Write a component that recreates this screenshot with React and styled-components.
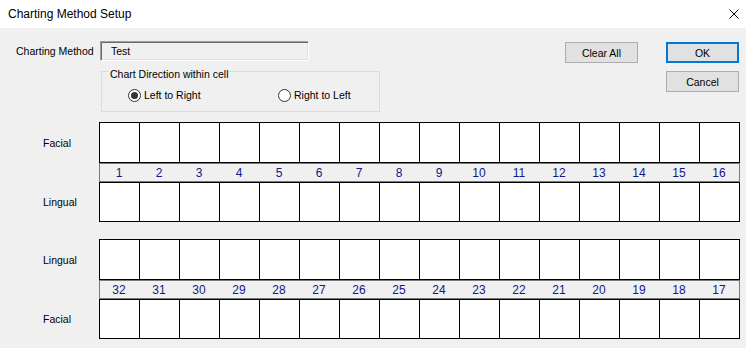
import React from 'react';
import styled, { createGlobalStyle } from 'styled-components';

const GlobalStyle = createGlobalStyle`
  html, body {
    margin: 0;
    padding: 0;
    background: #f0f0f0;
  }
  body {
    font-family: "Liberation Sans", Arial, sans-serif;
    font-size: 10.5px;
    color: #000;
  }
`;

const upperTeeth = Array.from({ length: 16 }, (_, i) => i + 1);
const lowerTeeth = Array.from({ length: 16 }, (_, i) => 32 - i);

const charts = [
  { top: 'Facial', bottom: 'Lingual', numbers: upperTeeth },
  { top: 'Lingual', bottom: 'Facial', numbers: lowerTeeth },
];

const ChartBlock = ({ top, bottom, numbers }) => (
  <Chart>
    <SideLabel $row={1}>{top}</SideLabel>
    <CellRow $row={1}>
      {numbers.map((n) => (
        <Cell key={n} />
      ))}
    </CellRow>
    <Band>
      {numbers.map((n) => (
        <ToothNumber key={n}>{n}</ToothNumber>
      ))}
    </Band>
    <SideLabel $row={3}>{bottom}</SideLabel>
    <CellRow $row={3}>
      {numbers.map((n) => (
        <Cell key={n} />
      ))}
    </CellRow>
  </Chart>
);

const App = () => {
  return (
    <Window>
      <GlobalStyle />
      <TitleBar>
        <Title>Charting Method Setup</Title>
        <svg width="10" height="10" viewBox="0 0 10 10">
          <path d="M0.5 0.5 L9.5 9.5 M9.5 0.5 L0.5 9.5" stroke="#000" strokeWidth="1" />
        </svg>
      </TitleBar>
      <Body>
        <TopArea>
          <FormColumn>
            <FieldRow>
              <FieldLabel>Charting Method</FieldLabel>
              <TextBox>Test</TextBox>
            </FieldRow>
            <GroupBox>
              <Legend>Chart Direction within cell</Legend>
              <RadioRow>
                <RadioOption $width={150}>
                  <RadioCircle>
                    <RadioDot />
                  </RadioCircle>
                  Left to Right
                </RadioOption>
                <RadioOption>
                  <RadioCircle />
                  Right to Left
                </RadioOption>
              </RadioRow>
            </GroupBox>
          </FormColumn>
          <ButtonArea>
            <Button>Clear All</Button>
            <ButtonColumn>
              <Button $primary>OK</Button>
              <Button>Cancel</Button>
            </ButtonColumn>
          </ButtonArea>
        </TopArea>
        <ChartList>
          {charts.map((c) => (
            <ChartBlock key={c.top} {...c} />
          ))}
        </ChartList>
      </Body>
    </Window>
  );
};

const Window = styled.div`
  width: 746px;
  height: 348px;
  display: flex;
  flex-direction: column;
  overflow: hidden;
`;

const TitleBar = styled.div`
  height: 28px;
  flex: none;
  background: #fff;
  display: flex;
  align-items: center;
  justify-content: space-between;
  padding: 0 7px 0 8px;
  box-sizing: border-box;
`;

const Title = styled.span`
  font-size: 12px;
`;

const Body = styled.div`
  flex: 1;
  display: flex;
  flex-direction: column;
  padding-top: 13px;
  background: #f0f0f0;
`;

const TopArea = styled.div`
  display: flex;
  justify-content: space-between;
  align-items: flex-start;
`;

const FormColumn = styled.div`
  display: flex;
  flex-direction: column;
`;

const FieldRow = styled.div`
  display: flex;
  align-items: center;
  height: 20px;
`;

const FieldLabel = styled.span`
  width: 100px;
  padding-left: 16px;
  box-sizing: border-box;
  line-height: 12px;
`;

const TextBox = styled.div`
  width: 209px;
  height: 20px;
  box-sizing: border-box;
  display: flex;
  align-items: center;
  padding-left: 10px;
  background: #f0f0f0;
  border: 1px solid;
  border-color: #a0a0a0 #fff #fff #a0a0a0;
  box-shadow: inset 1px 1px 0 #696969, inset -1px -1px 0 #e3e3e3;
`;

const GroupBox = styled.div`
  margin: 10px 0 0 101px;
  width: 279px;
  box-sizing: border-box;
  border: 1px solid #dcdcdc;
  padding-bottom: 8px;
`;

const Legend = styled.div`
  width: fit-content;
  margin: -4px 0 0 7px;
  padding: 0 1px;
  line-height: 12px;
  background: #f0f0f0;
`;

const RadioRow = styled.div`
  display: flex;
  align-items: center;
  height: 16px;
  margin-top: 7px;
  padding-left: 26px;
`;

const RadioOption = styled.label`
  display: flex;
  align-items: center;
  gap: 3px;
  width: ${(p) => (p.$width ? `${p.$width}px` : 'auto')};
`;

const RadioCircle = styled.span`
  width: 13px;
  height: 13px;
  box-sizing: border-box;
  border: 1px solid #333;
  border-radius: 50%;
  background: #fff;
  display: flex;
  align-items: center;
  justify-content: center;
`;

const RadioDot = styled.span`
  width: 7px;
  height: 7px;
  border-radius: 50%;
  background: #333;
`;

const ButtonArea = styled.div`
  display: flex;
  align-items: flex-start;
  gap: 28px;
  padding: 1px 7px 0 0;
`;

const ButtonColumn = styled.div`
  display: flex;
  flex-direction: column;
  gap: 8px;
`;

const Button = styled.button`
  width: 73px;
  height: 21px;
  box-sizing: border-box;
  padding: 0;
  margin: 0;
  background: #e1e1e1;
  border: ${(p) => (p.$primary ? '2px solid #0078d7' : '1px solid #adadad')};
  font-family: "Liberation Sans", Arial, sans-serif;
  font-size: 10.5px;
  color: #000;
`;

const ChartList = styled.div`
  display: flex;
  flex-direction: column;
  gap: 17px;
  margin-top: 10px;
`;

const Chart = styled.div`
  display: grid;
  grid-template-columns: 99px 641px;
  grid-template-rows: 41px 19px 40px;
`;

const SideLabel = styled.div`
  grid-column: 1;
  grid-row: ${(p) => p.$row};
  display: flex;
  align-items: center;
  padding-left: 43px;
`;

const CellRow = styled.div`
  grid-column: 2;
  grid-row: ${(p) => p.$row};
  display: flex;
`;

const Cell = styled.div`
  flex: none;
  width: 41px;
  height: 100%;
  box-sizing: border-box;
  border: 1px solid #000;
  background: #fff;

  & + & {
    margin-left: -1px;
  }
`;

const Band = styled.div`
  grid-column: 2;
  grid-row: 2;
  display: grid;
  grid-template-columns: repeat(16, 40px);
  align-items: center;
  background: #f0f0f0;
  box-shadow: inset 0 0 0 1px #7a7a7a;
`;

const ToothNumber = styled.span`
  text-align: center;
  font-size: 12px;
  line-height: 1;
  color: #161688;
`;

export default App;
